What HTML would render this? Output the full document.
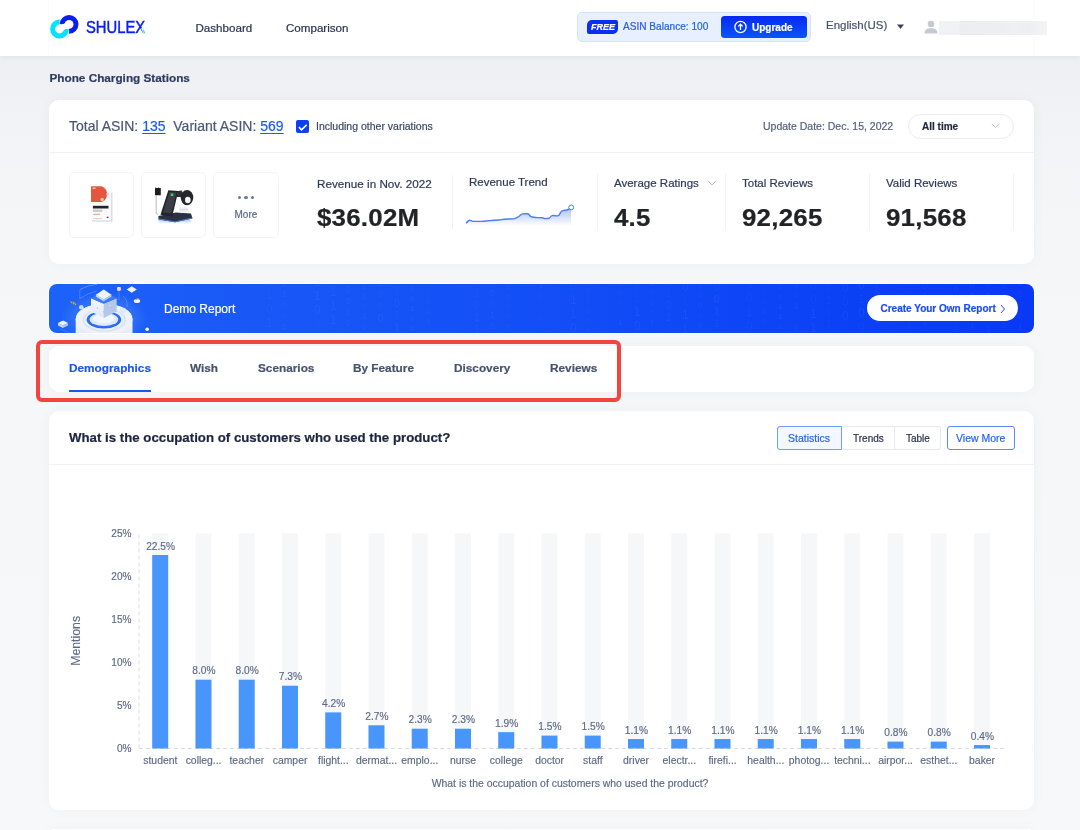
<!DOCTYPE html>
<html><head><meta charset="utf-8">
<style>
*{box-sizing:border-box;margin:0;padding:0}
html,body{width:1080px;height:830px;overflow:hidden}
body{will-change:transform}
.t{-webkit-text-stroke:0.2px currentColor}
body{background:linear-gradient(180deg,#edeff3 56px,#eff1f4 90px,#f2f3f6 130px,#f5f6f8 230px,#f6f7f9 500px,#f7f8fa 830px);font-family:"Liberation Sans",sans-serif;position:relative;color:#2e3a59}
.abs{position:absolute}
.t{position:absolute;white-space:nowrap;line-height:1}
#hdr{position:absolute;left:0;top:0;width:1080px;height:55.5px;background:#fff;box-shadow:0 1px 4px rgba(40,60,100,0.07)}
.card{position:absolute;background:#fff;border-radius:10px;box-shadow:0 0 14px rgba(30,40,70,0.035)}
</style></head>
<body>
<div id="hdr">
  <div class="abs" style="left:48px;top:0;width:1px;height:56px;background:#fafbfc"></div>
  <div class="abs" style="left:1034px;top:0;width:1px;height:56px;background:#fafbfc"></div>
  <svg class="abs" style="left:0;top:0" width="160" height="56" viewBox="0 0 160 56">
    <path d="M59.5 29 V19.6 A9.4 9.4 0 1 0 68.9 29 Z" fill="#00e5fd"/>
    <path d="M69.1 24.3 H59.7 A9.4 9.4 0 1 1 69.1 33.7 Z" fill="#0a1ef2"/>
    <circle cx="59.5" cy="29" r="4.4" fill="#fff"/>
    <circle cx="69.1" cy="24.3" r="4.4" fill="#fff"/>
    <path d="M59.5 29 L69.1 24.3" stroke="#fff" stroke-width="5.5"/>
  </svg>
  <div class="t" style="left:85.5px;top:18.5px;font-size:17px;color:#0820f4;transform:scaleX(0.87);transform-origin:0 0;-webkit-text-stroke:0.45px #0820f4">SHULEX</div>
  <svg class="abs" style="left:138px;top:26px" width="10" height="10" viewBox="138 26 10 10"><path d="M140.9 28.3 L142.6 28.3 L145.9 33.4 L143.6 33.4Z" fill="#fff"/><path d="M142.3 29.8 L143.6 29.8 L145.4 32.9 L144 32.9Z" fill="#3cd6f4"/></svg>
  <div class="t" style="left:195.5px;top:21.8px;font-size:11.6px;color:#28334f">Dashboard</div>
  <div class="t" style="left:286px;top:21.8px;font-size:11.6px;color:#28334f">Comparison</div>
  <div class="abs" style="left:577px;top:12px;width:234px;height:30px;background:#e9f0fd;border:1px solid #d6e2f8;border-radius:5px"></div>
  <div class="abs" style="left:586.5px;top:20px;width:31.7px;height:13.5px;background:#0a2ef2;border-radius:5px 2px 5px 2px"></div>
  <div class="t" style="left:591px;top:22.7px;font-size:9px;font-weight:bold;font-style:italic;color:#fff">FREE</div>
  <div class="t" style="left:623px;top:22px;font-size:10.1px;color:#2461ee">ASIN Balance: 100</div>
  <div class="abs" style="left:721px;top:16px;width:86px;height:21.5px;background:linear-gradient(180deg,#0628f0,#0a56fa);border-radius:3.5px"></div>
  <svg class="abs" style="left:733px;top:19.5px" width="15" height="15" viewBox="0 0 15 15">
    <circle cx="7.5" cy="7" r="5.6" fill="none" stroke="#fff" stroke-width="1.3"/>
    <path d="M7.5 10V4.3M5.3 6.4L7.5 4.2L9.7 6.4" fill="none" stroke="#fff" stroke-width="1.3"/>
  </svg>
  <div class="t" style="left:752px;top:23px;font-size:10px;font-weight:bold;color:#fff">Upgrade</div>
  <div class="t" style="left:826px;top:20px;font-size:11.5px;color:#47526f">English(US)</div>
  <svg class="abs" style="left:896px;top:24px" width="9" height="6"><path d="M1 0.5H8L4.5 5Z" fill="#3a4462"/></svg>
  <svg class="abs" style="left:923px;top:19px" width="16" height="16" viewBox="0 0 16 16">
    <circle cx="8" cy="5" r="3.3" fill="#c5c9d2"/>
    <path d="M1.5 14.5C1.5 10.5 4.5 9.3 8 9.3S14.5 10.5 14.5 14.5Z" fill="#c5c9d2"/>
  </svg>
  <div class="abs" style="left:939px;top:21px;width:108px;height:14px;background:linear-gradient(90deg,#f1f2f5 0,#f1f2f5 20px,#ebedf0 21px,#eceef1 60px,#eef0f3 75px,#eceef1 90px,#f3f4f6 108px)"></div>
</div>

<div class="t" style="left:49.5px;top:71.5px;font-size:11.75px;font-weight:bold;color:#2b3a5e">Phone Charging Stations</div>

<!-- Card 1 -->
<div class="card" style="left:49px;top:100px;width:985px;height:164px"></div>
<div class="t" style="left:69px;top:119px;font-size:14px;color:#4b5677">Total ASIN: <span style="color:#1d5cf0;text-decoration:underline;text-decoration-thickness:1.4px;text-underline-offset:2px">135</span>&nbsp; Variant ASIN: <span style="color:#1d5cf0;text-decoration:underline;text-decoration-thickness:1.4px;text-underline-offset:2px">569</span></div>
<div class="abs" style="left:296px;top:119.5px;width:13px;height:13px;background:#0b40f4;border-radius:2px"></div>
<svg class="abs" style="left:296px;top:119.5px" width="13" height="13"><path d="M2.9 7L5.5 9.8L10.7 4.8" fill="none" stroke="#fff" stroke-width="1.6"/></svg>
<div class="t" style="left:316px;top:121px;font-size:10.5px;color:#3d4866">Including other variations</div>
<div class="t" style="left:763px;top:121px;font-size:10.5px;color:#56617e">Update Date: Dec. 15, 2022</div>
<div class="abs" style="left:908px;top:113.5px;width:106px;height:25.5px;border:1px solid #ebedf1;border-radius:13px"></div>
<div class="t" style="left:922px;top:122px;font-size:10px;font-weight:bold;color:#1f2740">All time</div>
<svg class="abs" style="left:991px;top:123px" width="10" height="6"><path d="M0.8 0.8L4.6 4.6L8.4 0.8" fill="none" stroke="#b6bcc8" stroke-width="1"/></svg>
<div class="abs" style="left:49px;top:152px;width:985px;height:1px;background:#f1f2f5"></div>

<!-- thumbnails -->
<div class="abs" style="left:69px;top:172px;width:65px;height:66px;border:1px solid #f3f4f7;border-radius:5px"></div>
<div class="abs" style="left:141px;top:172px;width:65px;height:66px;border:1px solid #f3f4f7;border-radius:5px"></div>
<div class="abs" style="left:213px;top:172px;width:66px;height:66px;border:1px solid #f3f4f7;border-radius:5px"></div>
<svg class="abs" style="left:86px;top:182px" width="32" height="44" viewBox="86 182 32 44">
  <rect x="92" y="192.6" width="20.5" height="29.1" fill="#d9dde5"/>
  <rect x="91" y="186.2" width="19.9" height="34.2" fill="#fbfbfc"/>
  <path d="M91 186.2 H101.5 A8.5 8.5 0 0 1 101.5 202.1 H91Z" fill="#e4573f"/>
  <rect x="92.5" y="187.5" width="3" height="1.3" fill="#f3c9bf"/>
  <circle cx="107.7" cy="193.9" r="1.5" fill="#f1cbbd"/>
  <circle cx="102.2" cy="199.5" r="1.8" fill="#ecc3a6"/>
  <rect x="92.9" y="205.8" width="15.6" height="2.7" fill="#232326"/>
  <rect x="92.9" y="209.5" width="9.5" height="2.5" fill="#c9cbd0"/>
  <rect x="93.2" y="213.8" width="6.8" height="1" fill="#ef9a5c"/>
  <rect x="106.7" y="216.7" width="1.8" height="1.3" fill="#444"/>
  <rect x="93" y="218.3" width="9" height="0.8" fill="#c4c6cc"/>
</svg>
<svg class="abs" style="left:145px;top:180px" width="56" height="50" viewBox="145 180 56 50">
  <defs><linearGradient id="bglow" x1="0" y1="0" x2="0" y2="1"><stop offset="0" stop-color="#6ea4ff" stop-opacity="0.9"/><stop offset="1" stop-color="#9cc2ff" stop-opacity="0"/></linearGradient></defs>
  <path d="M157.5 218 L190 219.5 L192 224 L160 224Z" fill="url(#bglow)"/>
  <path d="M158.3 216 L176 212.5 L191 213.5 L192.5 218.5 L175 222.3 L158.8 219.5Z" fill="#2b3140"/>
  <path d="M158.5 218.8 L175 221.8 L192.3 218" fill="none" stroke="#4f7fe0" stroke-width="0.9"/>
  <path d="M155.7 187 V188 M158.5 187 V188" stroke="#777" stroke-width="0.6"/>
  <rect x="155" y="188.1" width="5.8" height="7.2" rx="0.5" fill="#1d1d1f"/>
  <path d="M156.2 195.3 V210.5 Q155 213.5 158 214.5" fill="none" stroke="#b9bcc4" stroke-width="1"/>
  <path d="M168.3 190.3 L178.3 190.9 L172.2 216.4 L160.5 214.7Z" fill="#242529"/>
  <path d="M169.5 192 L176.5 192.5 L171.5 213.5 L163 212.5Z" fill="#3b3e47"/>
  <rect x="170.8" y="193.6" width="2.5" height="2.3" fill="#2ee85a"/>
  <path d="M177.8 191 L182 190.5 L183 197 L176.5 197Z" fill="#2e2f33"/>
  <ellipse cx="187" cy="197.6" rx="6.3" ry="7.6" fill="#26272b"/>
  <ellipse cx="187.8" cy="200" rx="2.8" ry="3.3" fill="#f5f6f8"/>
  <path d="M178.8 208 L186.5 206.8 L189 211.5 L181 213.2Z" fill="#eceef2"/>
  <path d="M179.5 210 L188.5 209" stroke="#c8ccd4" stroke-width="0.6"/>
</svg>
<div class="abs" style="left:237.7px;top:196px;width:3.4px;height:3.4px;border-radius:50%;background:#6b7899"></div>
<div class="abs" style="left:244.4px;top:196px;width:3.4px;height:3.4px;border-radius:50%;background:#6b7899"></div>
<div class="abs" style="left:250.9px;top:196px;width:3.4px;height:3.4px;border-radius:50%;background:#6b7899"></div>
<div class="t" style="left:234.5px;top:210px;font-size:10px;color:#5e6a88">More</div>

<div class="t" style="left:317px;top:178px;font-size:11.7px;color:#2e3a59">Revenue in Nov. 2022</div>
<div class="t" style="left:317px;top:206.5px;font-size:23px;font-weight:bold;color:#222327;transform:scaleX(1.125);transform-origin:0 0;letter-spacing:0.2px">$36.02M</div>
<div class="abs" style="left:452px;top:175px;width:1px;height:54px;background:#f1f2f5"></div>
<div class="t" style="left:469px;top:176.5px;font-size:11.5px;color:#2e3a59">Revenue Trend</div>
<svg class="abs" style="left:460px;top:195px" width="120" height="35" viewBox="460 195 120 35">
  <defs><linearGradient id="sg" x1="0" y1="0" x2="0" y2="1"><stop offset="0" stop-color="#4a7cf5" stop-opacity="0.45"/><stop offset="1" stop-color="#4a7cf5" stop-opacity="0"/></linearGradient></defs>
  <path d="M466.1 223.3 C468 221 469 220 470 220.3 S472 221.4 473.3 221.4 L482.2 221.4 C486 221 488 220.6 490 220.6 S497 220 498.9 220 S502 219.2 504.4 219.2 S511 218.9 513.3 218.9 S516 217.8 517.8 217.2 S521 214 522.2 213.9 L527.8 213.7 C529 214 530 216.5 531.1 216.7 S536 217.6 537.8 217.6 S541 217.5 542.2 217.8 S544 218.6 545.6 218.6 S548 218.5 548.9 218.3 S551 215.8 552.2 215.6 S556 215.9 557.8 215.9 S560.5 211.5 561.7 211.1 S565 210 566.7 210 L571 208.5 L571 226 L466 226Z" fill="url(#sg)"/>
  <path d="M466.1 223.3 C468 221 469 220 470 220.3 S472 221.4 473.3 221.4 L482.2 221.4 C486 221 488 220.6 490 220.6 S497 220 498.9 220 S502 219.2 504.4 219.2 S511 218.9 513.3 218.9 S516 217.8 517.8 217.2 S521 214 522.2 213.9 L527.8 213.7 C529 214 530 216.5 531.1 216.7 S536 217.6 537.8 217.6 S541 217.5 542.2 217.8 S544 218.6 545.6 218.6 S548 218.5 548.9 218.3 S551 215.8 552.2 215.6 S556 215.9 557.8 215.9 S560.5 211.5 561.7 211.1 S565 210 566.7 210 L571 208.5" fill="none" stroke="#4a7cf5" stroke-width="1.4"/>
  <circle cx="571.2" cy="207.4" r="2.4" fill="#fff" stroke="#4a7cf5" stroke-width="1"/>
</svg>
<div class="abs" style="left:597px;top:173px;width:1px;height:57px;background:#f1f2f5"></div>
<div class="t" style="left:614px;top:178px;font-size:11.5px;color:#2e3a59">Average Ratings</div>
<svg class="abs" style="left:708px;top:181px" width="8" height="5"><path d="M0.5 0.5L4 4L7.5 0.5" fill="none" stroke="#b6bcc8" stroke-width="0.9"/></svg>
<div class="t" style="left:614px;top:206.5px;font-size:23px;font-weight:bold;color:#222327;transform:scaleX(1.125);transform-origin:0 0;letter-spacing:0.2px">4.5</div>
<div class="abs" style="left:725px;top:173px;width:1px;height:57px;background:#f1f2f5"></div>
<div class="t" style="left:742px;top:178px;font-size:11.5px;color:#2e3a59">Total Reviews</div>
<div class="t" style="left:742px;top:206.5px;font-size:23px;font-weight:bold;color:#222327;transform:scaleX(1.125);transform-origin:0 0;letter-spacing:0.2px">92,265</div>
<div class="abs" style="left:869px;top:173px;width:1px;height:57px;background:#f1f2f5"></div>
<div class="t" style="left:886px;top:178px;font-size:11.5px;color:#2e3a59">Valid Reviews</div>
<div class="t" style="left:886px;top:206.5px;font-size:23px;font-weight:bold;color:#222327;transform:scaleX(1.125);transform-origin:0 0;letter-spacing:0.2px">91,568</div>
<div class="abs" style="left:1013px;top:173px;width:1px;height:57px;background:#f1f2f5"></div>

<!-- Banner -->
<div class="abs" style="left:49px;top:284px;width:985px;height:49px;border-radius:8px;box-shadow:0 0 0 1px rgba(255,255,255,0.9);background:linear-gradient(90deg,#1c62f8 0%,#1958f7 20%,#1450f6 45%,#0c44f6 75%,#0838f5 100%);overflow:hidden"></div>
<svg class="abs" style="left:49px;top:284px" width="985" height="49" viewBox="0 0 985 49"><g font-family="Liberation Sans"><text x="217" y="1" font-size="12" fill="#fff" fill-opacity="0.042">0</text><text x="217" y="15" font-size="12" fill="#fff" fill-opacity="0.032">1</text><text x="217" y="29" font-size="12" fill="#fff" fill-opacity="0.026">0</text><text x="217" y="43" font-size="12" fill="#fff" fill-opacity="0.037">1</text><text x="233" y="2" font-size="9" fill="#fff" fill-opacity="0.042">0</text><text x="233" y="13" font-size="9" fill="#fff" fill-opacity="0.042">1</text><text x="233" y="24" font-size="9" fill="#fff" fill-opacity="0.026">0</text><text x="233" y="35" font-size="9" fill="#fff" fill-opacity="0.032">0</text><text x="233" y="46" font-size="9" fill="#fff" fill-opacity="0.047">0</text><text x="265" y="2" font-size="12" fill="#fff" fill-opacity="0.042">1</text><text x="265" y="16" font-size="12" fill="#fff" fill-opacity="0.053">1</text><text x="265" y="30" font-size="12" fill="#fff" fill-opacity="0.047">0</text><text x="265" y="44" font-size="12" fill="#fff" fill-opacity="0.021">0</text><text x="281" y="-2" font-size="12" fill="#fff" fill-opacity="0.037">1</text><text x="281" y="12" font-size="12" fill="#fff" fill-opacity="0.037">1</text><text x="281" y="26" font-size="12" fill="#fff" fill-opacity="0.042">1</text><text x="281" y="40" font-size="12" fill="#fff" fill-opacity="0.042">1</text><text x="297" y="-2" font-size="9" fill="#fff" fill-opacity="0.053">1</text><text x="297" y="9" font-size="9" fill="#fff" fill-opacity="0.042">0</text><text x="297" y="20" font-size="9" fill="#fff" fill-opacity="0.042">0</text><text x="297" y="31" font-size="9" fill="#fff" fill-opacity="0.032">1</text><text x="297" y="42" font-size="9" fill="#fff" fill-opacity="0.037">0</text><text x="313" y="5" font-size="8" fill="#fff" fill-opacity="0.047">1</text><text x="313" y="15" font-size="8" fill="#fff" fill-opacity="0.047">1</text><text x="313" y="25" font-size="8" fill="#fff" fill-opacity="0.032">0</text><text x="313" y="35" font-size="8" fill="#fff" fill-opacity="0.047">1</text><text x="313" y="45" font-size="8" fill="#fff" fill-opacity="0.042">0</text><text x="329" y="2" font-size="10" fill="#fff" fill-opacity="0.037">1</text><text x="329" y="14" font-size="10" fill="#fff" fill-opacity="0.032">0</text><text x="329" y="26" font-size="10" fill="#fff" fill-opacity="0.026">0</text><text x="329" y="38" font-size="10" fill="#fff" fill-opacity="0.053">0</text><text x="345" y="-1" font-size="10" fill="#fff" fill-opacity="0.042">0</text><text x="345" y="11" font-size="10" fill="#fff" fill-opacity="0.032">1</text><text x="345" y="23" font-size="10" fill="#fff" fill-opacity="0.047">0</text><text x="345" y="35" font-size="10" fill="#fff" fill-opacity="0.032">1</text><text x="345" y="47" font-size="10" fill="#fff" fill-opacity="0.042">1</text><text x="361" y="7" font-size="8" fill="#fff" fill-opacity="0.037">1</text><text x="361" y="17" font-size="8" fill="#fff" fill-opacity="0.053">0</text><text x="361" y="27" font-size="8" fill="#fff" fill-opacity="0.053">1</text><text x="361" y="37" font-size="8" fill="#fff" fill-opacity="0.037">1</text><text x="361" y="47" font-size="8" fill="#fff" fill-opacity="0.047">0</text><text x="377" y="0" font-size="8" fill="#fff" fill-opacity="0.042">1</text><text x="377" y="10" font-size="8" fill="#fff" fill-opacity="0.021">0</text><text x="377" y="20" font-size="8" fill="#fff" fill-opacity="0.037">1</text><text x="377" y="30" font-size="8" fill="#fff" fill-opacity="0.042">1</text><text x="377" y="40" font-size="8" fill="#fff" fill-opacity="0.042">1</text><text x="425" y="1" font-size="10" fill="#fff" fill-opacity="0.032">1</text><text x="425" y="13" font-size="10" fill="#fff" fill-opacity="0.026">1</text><text x="425" y="25" font-size="10" fill="#fff" fill-opacity="0.032">0</text><text x="425" y="37" font-size="10" fill="#fff" fill-opacity="0.047">1</text><text x="425" y="49" font-size="10" fill="#fff" fill-opacity="0.032">1</text><text x="441" y="-10" font-size="9" fill="#fff" fill-opacity="0.037">1</text><text x="441" y="1" font-size="9" fill="#fff" fill-opacity="0.026">1</text><text x="441" y="12" font-size="9" fill="#fff" fill-opacity="0.042">0</text><text x="441" y="23" font-size="9" fill="#fff" fill-opacity="0.026">0</text><text x="441" y="34" font-size="9" fill="#fff" fill-opacity="0.053">1</text><text x="441" y="45" font-size="9" fill="#fff" fill-opacity="0.037">0</text><text x="457" y="-5" font-size="8" fill="#fff" fill-opacity="0.042">1</text><text x="457" y="5" font-size="8" fill="#fff" fill-opacity="0.047">0</text><text x="457" y="15" font-size="8" fill="#fff" fill-opacity="0.032">1</text><text x="457" y="25" font-size="8" fill="#fff" fill-opacity="0.021">0</text><text x="457" y="35" font-size="8" fill="#fff" fill-opacity="0.032">0</text><text x="457" y="45" font-size="8" fill="#fff" fill-opacity="0.047">0</text><text x="489" y="-8" font-size="10" fill="#fff" fill-opacity="0.037">0</text><text x="489" y="4" font-size="10" fill="#fff" fill-opacity="0.037">1</text><text x="489" y="16" font-size="10" fill="#fff" fill-opacity="0.032">1</text><text x="489" y="28" font-size="10" fill="#fff" fill-opacity="0.021">1</text><text x="489" y="40" font-size="10" fill="#fff" fill-opacity="0.026">1</text><text x="521" y="6" font-size="12" fill="#fff" fill-opacity="0.021">0</text><text x="521" y="20" font-size="12" fill="#fff" fill-opacity="0.047">1</text><text x="521" y="34" font-size="12" fill="#fff" fill-opacity="0.037">1</text><text x="521" y="48" font-size="12" fill="#fff" fill-opacity="0.047">0</text><text x="537" y="-1" font-size="8" fill="#fff" fill-opacity="0.021">0</text><text x="537" y="9" font-size="8" fill="#fff" fill-opacity="0.047">0</text><text x="537" y="19" font-size="8" fill="#fff" fill-opacity="0.037">1</text><text x="537" y="29" font-size="8" fill="#fff" fill-opacity="0.037">0</text><text x="537" y="39" font-size="8" fill="#fff" fill-opacity="0.026">0</text><text x="537" y="49" font-size="8" fill="#fff" fill-opacity="0.026">1</text><text x="569" y="-9" font-size="8" fill="#fff" fill-opacity="0.026">1</text><text x="569" y="1" font-size="8" fill="#fff" fill-opacity="0.047">1</text><text x="569" y="11" font-size="8" fill="#fff" fill-opacity="0.032">0</text><text x="569" y="21" font-size="8" fill="#fff" fill-opacity="0.026">0</text><text x="569" y="31" font-size="8" fill="#fff" fill-opacity="0.026">0</text><text x="569" y="41" font-size="8" fill="#fff" fill-opacity="0.053">1</text><text x="585" y="-10" font-size="12" fill="#fff" fill-opacity="0.021">1</text><text x="585" y="4" font-size="12" fill="#fff" fill-opacity="0.026">1</text><text x="585" y="18" font-size="12" fill="#fff" fill-opacity="0.021">1</text><text x="585" y="32" font-size="12" fill="#fff" fill-opacity="0.047">1</text><text x="585" y="46" font-size="12" fill="#fff" fill-opacity="0.047">0</text><text x="601" y="-9" font-size="8" fill="#fff" fill-opacity="0.021">0</text><text x="601" y="1" font-size="8" fill="#fff" fill-opacity="0.047">0</text><text x="601" y="11" font-size="8" fill="#fff" fill-opacity="0.037">0</text><text x="601" y="21" font-size="8" fill="#fff" fill-opacity="0.032">1</text><text x="601" y="31" font-size="8" fill="#fff" fill-opacity="0.021">1</text><text x="601" y="41" font-size="8" fill="#fff" fill-opacity="0.042">1</text><text x="617" y="1" font-size="10" fill="#fff" fill-opacity="0.053">0</text><text x="617" y="13" font-size="10" fill="#fff" fill-opacity="0.026">1</text><text x="617" y="25" font-size="10" fill="#fff" fill-opacity="0.042">0</text><text x="617" y="37" font-size="10" fill="#fff" fill-opacity="0.047">1</text><text x="617" y="49" font-size="10" fill="#fff" fill-opacity="0.021">0</text><text x="633" y="7" font-size="12" fill="#fff" fill-opacity="0.042">0</text><text x="633" y="21" font-size="12" fill="#fff" fill-opacity="0.021">1</text><text x="633" y="35" font-size="12" fill="#fff" fill-opacity="0.047">1</text><text x="633" y="49" font-size="12" fill="#fff" fill-opacity="0.037">1</text><text x="649" y="4" font-size="8" fill="#fff" fill-opacity="0.026">0</text><text x="649" y="14" font-size="8" fill="#fff" fill-opacity="0.042">1</text><text x="649" y="24" font-size="8" fill="#fff" fill-opacity="0.047">0</text><text x="649" y="34" font-size="8" fill="#fff" fill-opacity="0.037">0</text><text x="649" y="44" font-size="8" fill="#fff" fill-opacity="0.053">0</text><text x="665" y="7" font-size="10" fill="#fff" fill-opacity="0.037">0</text><text x="665" y="19" font-size="10" fill="#fff" fill-opacity="0.053">0</text><text x="665" y="31" font-size="10" fill="#fff" fill-opacity="0.042">1</text><text x="665" y="43" font-size="10" fill="#fff" fill-opacity="0.037">1</text><text x="697" y="-10" font-size="12" fill="#fff" fill-opacity="0.026">0</text><text x="697" y="4" font-size="12" fill="#fff" fill-opacity="0.021">1</text><text x="697" y="18" font-size="12" fill="#fff" fill-opacity="0.037">0</text><text x="697" y="32" font-size="12" fill="#fff" fill-opacity="0.026">1</text><text x="697" y="46" font-size="12" fill="#fff" fill-opacity="0.032">0</text><text x="713" y="-10" font-size="8" fill="#fff" fill-opacity="0.047">1</text><text x="713" y="0" font-size="8" fill="#fff" fill-opacity="0.037">1</text><text x="713" y="10" font-size="8" fill="#fff" fill-opacity="0.021">0</text><text x="713" y="20" font-size="8" fill="#fff" fill-opacity="0.026">0</text><text x="713" y="30" font-size="8" fill="#fff" fill-opacity="0.053">0</text><text x="713" y="40" font-size="8" fill="#fff" fill-opacity="0.037">0</text><text x="729" y="-5" font-size="8" fill="#fff" fill-opacity="0.053">0</text><text x="729" y="5" font-size="8" fill="#fff" fill-opacity="0.037">0</text><text x="729" y="15" font-size="8" fill="#fff" fill-opacity="0.032">1</text><text x="729" y="25" font-size="8" fill="#fff" fill-opacity="0.053">1</text><text x="729" y="35" font-size="8" fill="#fff" fill-opacity="0.053">1</text><text x="729" y="45" font-size="8" fill="#fff" fill-opacity="0.037">1</text><text x="745" y="3" font-size="9" fill="#fff" fill-opacity="0.042">1</text><text x="745" y="14" font-size="9" fill="#fff" fill-opacity="0.026">1</text><text x="745" y="25" font-size="9" fill="#fff" fill-opacity="0.047">1</text><text x="745" y="36" font-size="9" fill="#fff" fill-opacity="0.026">0</text><text x="745" y="47" font-size="9" fill="#fff" fill-opacity="0.042">1</text><text x="761" y="6" font-size="12" fill="#fff" fill-opacity="0.026">0</text><text x="761" y="20" font-size="12" fill="#fff" fill-opacity="0.026">0</text><text x="761" y="34" font-size="12" fill="#fff" fill-opacity="0.053">1</text><text x="761" y="48" font-size="12" fill="#fff" fill-opacity="0.042">1</text><text x="777" y="8" font-size="10" fill="#fff" fill-opacity="0.032">0</text><text x="777" y="20" font-size="10" fill="#fff" fill-opacity="0.037">1</text><text x="777" y="32" font-size="10" fill="#fff" fill-opacity="0.026">1</text><text x="777" y="44" font-size="10" fill="#fff" fill-opacity="0.026">1</text><text x="793" y="-6" font-size="12" fill="#fff" fill-opacity="0.042">1</text><text x="793" y="8" font-size="12" fill="#fff" fill-opacity="0.037">0</text><text x="793" y="22" font-size="12" fill="#fff" fill-opacity="0.037">0</text><text x="793" y="36" font-size="12" fill="#fff" fill-opacity="0.047">0</text><text x="809" y="-9" font-size="12" fill="#fff" fill-opacity="0.047">0</text><text x="809" y="5" font-size="12" fill="#fff" fill-opacity="0.053">0</text><text x="809" y="19" font-size="12" fill="#fff" fill-opacity="0.026">1</text><text x="809" y="33" font-size="12" fill="#fff" fill-opacity="0.047">0</text><text x="809" y="47" font-size="12" fill="#fff" fill-opacity="0.026">0</text><text x="825" y="-9" font-size="10" fill="#fff" fill-opacity="0.047">0</text><text x="825" y="3" font-size="10" fill="#fff" fill-opacity="0.026">1</text><text x="825" y="15" font-size="10" fill="#fff" fill-opacity="0.042">0</text><text x="825" y="27" font-size="10" fill="#fff" fill-opacity="0.026">0</text><text x="825" y="39" font-size="10" fill="#fff" fill-opacity="0.047">1</text><text x="857" y="8" font-size="10" fill="#fff" fill-opacity="0.021">0</text><text x="857" y="20" font-size="10" fill="#fff" fill-opacity="0.037">1</text><text x="857" y="32" font-size="10" fill="#fff" fill-opacity="0.021">1</text><text x="857" y="44" font-size="10" fill="#fff" fill-opacity="0.032">1</text><text x="873" y="-7" font-size="10" fill="#fff" fill-opacity="0.042">0</text><text x="873" y="5" font-size="10" fill="#fff" fill-opacity="0.037">0</text><text x="873" y="17" font-size="10" fill="#fff" fill-opacity="0.026">1</text><text x="873" y="29" font-size="10" fill="#fff" fill-opacity="0.042">1</text><text x="873" y="41" font-size="10" fill="#fff" fill-opacity="0.047">1</text><text x="905" y="-2" font-size="8" fill="#fff" fill-opacity="0.042">1</text><text x="905" y="8" font-size="8" fill="#fff" fill-opacity="0.042">0</text><text x="905" y="18" font-size="8" fill="#fff" fill-opacity="0.021">1</text><text x="905" y="28" font-size="8" fill="#fff" fill-opacity="0.042">1</text><text x="905" y="38" font-size="8" fill="#fff" fill-opacity="0.042">0</text><text x="905" y="48" font-size="8" fill="#fff" fill-opacity="0.026">0</text><text x="921" y="4" font-size="8" fill="#fff" fill-opacity="0.053">0</text><text x="921" y="14" font-size="8" fill="#fff" fill-opacity="0.053">0</text><text x="921" y="24" font-size="8" fill="#fff" fill-opacity="0.037">1</text><text x="921" y="34" font-size="8" fill="#fff" fill-opacity="0.037">0</text><text x="921" y="44" font-size="8" fill="#fff" fill-opacity="0.047">1</text><text x="937" y="-7" font-size="9" fill="#fff" fill-opacity="0.032">1</text><text x="937" y="4" font-size="9" fill="#fff" fill-opacity="0.032">1</text><text x="937" y="15" font-size="9" fill="#fff" fill-opacity="0.047">0</text><text x="937" y="26" font-size="9" fill="#fff" fill-opacity="0.037">0</text><text x="937" y="37" font-size="9" fill="#fff" fill-opacity="0.026">1</text><text x="937" y="48" font-size="9" fill="#fff" fill-opacity="0.047">1</text><text x="953" y="4" font-size="8" fill="#fff" fill-opacity="0.037">1</text><text x="953" y="14" font-size="8" fill="#fff" fill-opacity="0.026">0</text><text x="953" y="24" font-size="8" fill="#fff" fill-opacity="0.042">0</text><text x="953" y="34" font-size="8" fill="#fff" fill-opacity="0.026">0</text><text x="953" y="44" font-size="8" fill="#fff" fill-opacity="0.037">0</text><text x="969" y="2" font-size="9" fill="#fff" fill-opacity="0.047">0</text><text x="969" y="13" font-size="9" fill="#fff" fill-opacity="0.037">0</text><text x="969" y="24" font-size="9" fill="#fff" fill-opacity="0.037">0</text><text x="969" y="35" font-size="9" fill="#fff" fill-opacity="0.047">0</text><text x="969" y="46" font-size="9" fill="#fff" fill-opacity="0.047">1</text></g></svg><svg class="abs" style="left:49px;top:284px" width="110" height="49" viewBox="49 284 110 49">
  <defs>
   <radialGradient id="glow" cx="0.5" cy="0.5" r="0.5"><stop offset="0" stop-color="#8fbaff" stop-opacity="0.5"/><stop offset="1" stop-color="#8fbaff" stop-opacity="0"/></radialGradient>
   <linearGradient id="plat" x1="0" y1="0" x2="0" y2="1"><stop offset="0" stop-color="#f6f8fd"/><stop offset="1" stop-color="#dfe7f5"/></linearGradient>
   <linearGradient id="lface" x1="0" y1="0" x2="0" y2="1"><stop offset="0" stop-color="#f4f7fd"/><stop offset="1" stop-color="#dfe8f8"/></linearGradient>
  </defs>
  <ellipse cx="104" cy="318" rx="44" ry="26" fill="url(#glow)"/>
  <path d="M75.7 319.3 A28.4 15.6 0 0 1 132.5 319.3 V345 H75.7Z" fill="url(#plat)"/>
  <ellipse cx="104.1" cy="319.3" rx="28.4" ry="15.6" fill="#edf2fa"/>
  <ellipse cx="104.3" cy="320" rx="21.7" ry="11.8" fill="#d9e3f3"/>
  <ellipse cx="104.3" cy="320" rx="20" ry="10.6" fill="#e9eff9"/>
  <ellipse cx="103.9" cy="319.7" rx="17.3" ry="8.75" fill="#2a6cf6"/>
  <ellipse cx="103.9" cy="319.4" rx="14.3" ry="6.6" fill="#dce8fc"/>
  <ellipse cx="103.9" cy="318.6" rx="11" ry="4.8" fill="#f1f5fd"/>
  <path d="M91 298.2 L103.7 303.7 L103.7 318 L91 311.5Z" fill="url(#lface)"/>
  <path d="M103.7 303.7 L116.7 298.2 L116.7 311.5 L103.7 318Z" fill="#b3c7e8"/>
  <path d="M91 298.2 L103.7 291.4 L116.7 298.2 L103.7 303.7Z" fill="#3b7bf7"/>
  <path d="M95.9 294.7 L103.7 289.5 L111.5 294.7 L103.7 299.5Z" fill="#eef2f9"/>
  <path d="M95.9 294.7 L103.7 299.5 L103.7 301.3 L95.9 296.5Z" fill="#d3def0"/>
  <path d="M103.7 299.5 L111.5 294.7 L111.5 296.5 L103.7 301.3Z" fill="#b9cbe9"/>
  <circle cx="97.5" cy="308" r="0.6" fill="#7aa5f5"/>
  <path d="M109 306 L111 305" stroke="#e8eef8" stroke-width="0.6"/>
  <path d="M58 323 L63 320.5 L68 323 L63 325.5Z" fill="#eef2fa"/>
  <path d="M58 323 L63 325.5 L63 328 L58 325.5Z" fill="#cdd8ec"/>
  <path d="M63 325.5 L68 323 L68 325.5 L63 328Z" fill="#b3c4e4"/>
  <path d="M126.7 289.4 L131.7 286.2 L136.8 289.4 L131.7 292.7Z" fill="#eef3fb"/>
  <rect x="117" y="286.9" width="3.9" height="3.9" rx="1.3" fill="#eef2f8"/>
  <rect x="117" y="288.5" width="3.9" height="0.9" fill="#f3b070"/>
  <circle cx="81.3" cy="307.3" r="2.3" fill="#c4d9fd"/>
  <circle cx="122.5" cy="310.5" r="3" fill="#cfe0fd" fill-opacity="0.55"/>
  <ellipse cx="137" cy="301" rx="3.2" ry="2" fill="#eef2fa"/>
  <path d="M135 300 L138.5 298.5" stroke="#f0a040" stroke-width="1.2"/>
  <path d="M70.5 301 L72 303.5 M72.8 301.5 L74 304.5 M74.5 302.5 L75.8 305" stroke="#f2a33a" stroke-width="1" fill="none"/>
  <path d="M80 289.5 Q88 285 97 284.3" stroke="#b7cffc" stroke-width="0.6" fill="none" opacity="0.7"/>
  <path d="M79.8 299 V290 M79.8 298.5 Q88 293 97 291" stroke="#b7cffc" stroke-width="0.5" fill="none" opacity="0.55"/>
  <path d="M119 291 V300 M123 296 Q128 300 127 307" stroke="#a9c4fb" stroke-width="0.5" fill="none" opacity="0.6"/>
  <path d="M60 329 L70 333" stroke="#a9c4fb" stroke-width="0.5" opacity="0.5"/>
  <circle cx="147.2" cy="329.3" r="1.8" fill="#fff"/>
</svg>
<div class="t" style="left:164px;top:303px;font-size:12px;color:#fff">Demo Report</div>
<div class="abs" style="left:867px;top:295px;width:151px;height:26px;border-radius:13px;background:#fff"></div>
<div class="t" style="left:880.5px;top:304px;font-size:10px;font-weight:bold;color:#1a4ef2">Create Your Own Report</div>
<svg class="abs" style="left:999.5px;top:303.5px" width="6" height="10"><path d="M1 1L4.5 5L1 9" fill="none" stroke="#1a4ef2" stroke-width="1"/></svg>

<!-- Tabs -->
<div class="card" style="left:49px;top:346px;width:985px;height:46px"></div>
<div class="t" style="left:69px;top:362.5px;font-size:11.8px;font-weight:bold;color:#1c57f0">Demographics</div>
<div class="abs" style="left:69px;top:390px;width:82px;height:2px;background:#1c57f0"></div>
<div class="t" style="left:190px;top:362.5px;font-size:11.8px;font-weight:bold;color:#47526f">Wish</div>
<div class="t" style="left:258px;top:362.5px;font-size:11.8px;font-weight:bold;color:#47526f">Scenarios</div>
<div class="t" style="left:353px;top:362.5px;font-size:11.8px;font-weight:bold;color:#47526f">By Feature</div>
<div class="t" style="left:454px;top:362.5px;font-size:11.8px;font-weight:bold;color:#47526f">Discovery</div>
<div class="t" style="left:550px;top:362.5px;font-size:11.8px;font-weight:bold;color:#47526f">Reviews</div>
<div class="abs" style="left:36px;top:339.5px;width:585px;height:62.5px;border:4px solid #f3443d;border-radius:6px"></div>

<!-- Chart card -->
<div class="card" style="left:49px;top:411px;width:985px;height:398.5px"></div>
<div class="t" style="left:69px;top:431px;font-size:13.25px;font-weight:bold;color:#1d2540">What is the occupation of customers who used the product?</div>
<div class="abs" style="left:49px;top:464px;width:985px;height:1px;background:#f1f2f5"></div>
<div class="abs" style="left:777px;top:426px;width:164px;height:24px;border:1px solid #e6e8ed;border-radius:3px"></div>
<div class="abs" style="left:777px;top:426px;width:65px;height:24px;border:1px solid #6e9cf6;background:#f4f7ff;border-radius:3px 0 0 3px"></div>
<div class="abs" style="left:894px;top:426px;width:1px;height:24px;background:#e6e8ed"></div>
<div class="t" style="left:788px;top:433px;font-size:10.5px;color:#2a62f0">Statistics</div>
<div class="t" style="left:853px;top:434px;font-size:10px;color:#28334f">Trends</div>
<div class="t" style="left:906px;top:434px;font-size:10px;color:#28334f">Table</div>
<div class="abs" style="left:947px;top:426px;width:68px;height:24px;border:1px solid #5b8cf0;border-radius:3px"></div>
<div class="t" style="left:956px;top:433px;font-size:10.5px;color:#2a62f0">View More</div>

<svg class="abs" id="chart" style="left:0;top:465px" width="1080" height="340" viewBox="0 465 1080 340">
<rect x="152.22" y="533.5" width="16" height="215.0" fill="#f6f7f9"/>
<rect x="195.47" y="533.5" width="16" height="215.0" fill="#f6f7f9"/>
<rect x="238.72" y="533.5" width="16" height="215.0" fill="#f6f7f9"/>
<rect x="281.98" y="533.5" width="16" height="215.0" fill="#f6f7f9"/>
<rect x="325.23" y="533.5" width="16" height="215.0" fill="#f6f7f9"/>
<rect x="368.48" y="533.5" width="16" height="215.0" fill="#f6f7f9"/>
<rect x="411.73" y="533.5" width="16" height="215.0" fill="#f6f7f9"/>
<rect x="454.98" y="533.5" width="16" height="215.0" fill="#f6f7f9"/>
<rect x="498.23" y="533.5" width="16" height="215.0" fill="#f6f7f9"/>
<rect x="541.48" y="533.5" width="16" height="215.0" fill="#f6f7f9"/>
<rect x="584.73" y="533.5" width="16" height="215.0" fill="#f6f7f9"/>
<rect x="627.98" y="533.5" width="16" height="215.0" fill="#f6f7f9"/>
<rect x="671.23" y="533.5" width="16" height="215.0" fill="#f6f7f9"/>
<rect x="714.48" y="533.5" width="16" height="215.0" fill="#f6f7f9"/>
<rect x="757.73" y="533.5" width="16" height="215.0" fill="#f6f7f9"/>
<rect x="800.98" y="533.5" width="16" height="215.0" fill="#f6f7f9"/>
<rect x="844.23" y="533.5" width="16" height="215.0" fill="#f6f7f9"/>
<rect x="887.48" y="533.5" width="16" height="215.0" fill="#f6f7f9"/>
<rect x="930.73" y="533.5" width="16" height="215.0" fill="#f6f7f9"/>
<rect x="973.98" y="533.5" width="16" height="215.0" fill="#f6f7f9"/>
<path d="M139.0 748.5V533.5M139.0 748.5H1004.0" fill="none" stroke="#d9dce1" stroke-width="1" stroke-dasharray="4 3"/>
<text x="131.5" y="752.10" text-anchor="end" font-family="Liberation Sans" stroke="#5d6985" stroke-width="0.15" font-size="10.1" fill="#5d6985">0%</text>
<text x="131.5" y="709.10" text-anchor="end" font-family="Liberation Sans" stroke="#5d6985" stroke-width="0.15" font-size="10.1" fill="#5d6985">5%</text>
<text x="131.5" y="666.10" text-anchor="end" font-family="Liberation Sans" stroke="#5d6985" stroke-width="0.15" font-size="10.1" fill="#5d6985">10%</text>
<text x="131.5" y="623.10" text-anchor="end" font-family="Liberation Sans" stroke="#5d6985" stroke-width="0.15" font-size="10.1" fill="#5d6985">15%</text>
<text x="131.5" y="580.10" text-anchor="end" font-family="Liberation Sans" stroke="#5d6985" stroke-width="0.15" font-size="10.1" fill="#5d6985">20%</text>
<text x="131.5" y="537.10" text-anchor="end" font-family="Liberation Sans" stroke="#5d6985" stroke-width="0.15" font-size="10.1" fill="#5d6985">25%</text>
<rect x="152.22" y="555.00" width="16" height="193.50" fill="#4896fb"/>
<text x="160.62" y="549.50" text-anchor="middle" font-family="Liberation Sans" stroke="#5d6985" stroke-width="0.15" font-size="10.2" fill="#5d6985">22.5%</text>
<text x="160.32" y="763.60" text-anchor="middle" font-family="Liberation Sans" stroke="#5d6985" stroke-width="0.15" font-size="10.4" fill="#5d6985">student</text>
<rect x="195.47" y="679.70" width="16" height="68.80" fill="#4896fb"/>
<text x="203.88" y="674.20" text-anchor="middle" font-family="Liberation Sans" stroke="#5d6985" stroke-width="0.15" font-size="10.2" fill="#5d6985">8.0%</text>
<text x="203.57" y="763.60" text-anchor="middle" font-family="Liberation Sans" stroke="#5d6985" stroke-width="0.15" font-size="10.4" fill="#5d6985">colleg...</text>
<rect x="238.72" y="679.70" width="16" height="68.80" fill="#4896fb"/>
<text x="247.12" y="674.20" text-anchor="middle" font-family="Liberation Sans" stroke="#5d6985" stroke-width="0.15" font-size="10.2" fill="#5d6985">8.0%</text>
<text x="246.82" y="763.60" text-anchor="middle" font-family="Liberation Sans" stroke="#5d6985" stroke-width="0.15" font-size="10.4" fill="#5d6985">teacher</text>
<rect x="281.98" y="685.72" width="16" height="62.78" fill="#4896fb"/>
<text x="290.38" y="680.22" text-anchor="middle" font-family="Liberation Sans" stroke="#5d6985" stroke-width="0.15" font-size="10.2" fill="#5d6985">7.3%</text>
<text x="290.07" y="763.60" text-anchor="middle" font-family="Liberation Sans" stroke="#5d6985" stroke-width="0.15" font-size="10.4" fill="#5d6985">camper</text>
<rect x="325.23" y="712.38" width="16" height="36.12" fill="#4896fb"/>
<text x="333.62" y="706.88" text-anchor="middle" font-family="Liberation Sans" stroke="#5d6985" stroke-width="0.15" font-size="10.2" fill="#5d6985">4.2%</text>
<text x="333.32" y="763.60" text-anchor="middle" font-family="Liberation Sans" stroke="#5d6985" stroke-width="0.15" font-size="10.4" fill="#5d6985">flight...</text>
<rect x="368.48" y="725.28" width="16" height="23.22" fill="#4896fb"/>
<text x="376.88" y="719.78" text-anchor="middle" font-family="Liberation Sans" stroke="#5d6985" stroke-width="0.15" font-size="10.2" fill="#5d6985">2.7%</text>
<text x="376.57" y="763.60" text-anchor="middle" font-family="Liberation Sans" stroke="#5d6985" stroke-width="0.15" font-size="10.4" fill="#5d6985">dermat...</text>
<rect x="411.73" y="728.72" width="16" height="19.78" fill="#4896fb"/>
<text x="420.12" y="723.22" text-anchor="middle" font-family="Liberation Sans" stroke="#5d6985" stroke-width="0.15" font-size="10.2" fill="#5d6985">2.3%</text>
<text x="419.82" y="763.60" text-anchor="middle" font-family="Liberation Sans" stroke="#5d6985" stroke-width="0.15" font-size="10.4" fill="#5d6985">emplo...</text>
<rect x="454.98" y="728.72" width="16" height="19.78" fill="#4896fb"/>
<text x="463.38" y="723.22" text-anchor="middle" font-family="Liberation Sans" stroke="#5d6985" stroke-width="0.15" font-size="10.2" fill="#5d6985">2.3%</text>
<text x="463.07" y="763.60" text-anchor="middle" font-family="Liberation Sans" stroke="#5d6985" stroke-width="0.15" font-size="10.4" fill="#5d6985">nurse</text>
<rect x="498.23" y="732.16" width="16" height="16.34" fill="#4896fb"/>
<text x="506.62" y="726.66" text-anchor="middle" font-family="Liberation Sans" stroke="#5d6985" stroke-width="0.15" font-size="10.2" fill="#5d6985">1.9%</text>
<text x="506.32" y="763.60" text-anchor="middle" font-family="Liberation Sans" stroke="#5d6985" stroke-width="0.15" font-size="10.4" fill="#5d6985">college</text>
<rect x="541.48" y="735.60" width="16" height="12.90" fill="#4896fb"/>
<text x="549.88" y="730.10" text-anchor="middle" font-family="Liberation Sans" stroke="#5d6985" stroke-width="0.15" font-size="10.2" fill="#5d6985">1.5%</text>
<text x="549.58" y="763.60" text-anchor="middle" font-family="Liberation Sans" stroke="#5d6985" stroke-width="0.15" font-size="10.4" fill="#5d6985">doctor</text>
<rect x="584.73" y="735.60" width="16" height="12.90" fill="#4896fb"/>
<text x="593.12" y="730.10" text-anchor="middle" font-family="Liberation Sans" stroke="#5d6985" stroke-width="0.15" font-size="10.2" fill="#5d6985">1.5%</text>
<text x="592.83" y="763.60" text-anchor="middle" font-family="Liberation Sans" stroke="#5d6985" stroke-width="0.15" font-size="10.4" fill="#5d6985">staff</text>
<rect x="627.98" y="739.04" width="16" height="9.46" fill="#4896fb"/>
<text x="636.38" y="733.54" text-anchor="middle" font-family="Liberation Sans" stroke="#5d6985" stroke-width="0.15" font-size="10.2" fill="#5d6985">1.1%</text>
<text x="636.08" y="763.60" text-anchor="middle" font-family="Liberation Sans" stroke="#5d6985" stroke-width="0.15" font-size="10.4" fill="#5d6985">driver</text>
<rect x="671.23" y="739.04" width="16" height="9.46" fill="#4896fb"/>
<text x="679.62" y="733.54" text-anchor="middle" font-family="Liberation Sans" stroke="#5d6985" stroke-width="0.15" font-size="10.2" fill="#5d6985">1.1%</text>
<text x="679.33" y="763.60" text-anchor="middle" font-family="Liberation Sans" stroke="#5d6985" stroke-width="0.15" font-size="10.4" fill="#5d6985">electr...</text>
<rect x="714.48" y="739.04" width="16" height="9.46" fill="#4896fb"/>
<text x="722.88" y="733.54" text-anchor="middle" font-family="Liberation Sans" stroke="#5d6985" stroke-width="0.15" font-size="10.2" fill="#5d6985">1.1%</text>
<text x="722.58" y="763.60" text-anchor="middle" font-family="Liberation Sans" stroke="#5d6985" stroke-width="0.15" font-size="10.4" fill="#5d6985">firefi...</text>
<rect x="757.73" y="739.04" width="16" height="9.46" fill="#4896fb"/>
<text x="766.12" y="733.54" text-anchor="middle" font-family="Liberation Sans" stroke="#5d6985" stroke-width="0.15" font-size="10.2" fill="#5d6985">1.1%</text>
<text x="765.83" y="763.60" text-anchor="middle" font-family="Liberation Sans" stroke="#5d6985" stroke-width="0.15" font-size="10.4" fill="#5d6985">health...</text>
<rect x="800.98" y="739.04" width="16" height="9.46" fill="#4896fb"/>
<text x="809.38" y="733.54" text-anchor="middle" font-family="Liberation Sans" stroke="#5d6985" stroke-width="0.15" font-size="10.2" fill="#5d6985">1.1%</text>
<text x="809.08" y="763.60" text-anchor="middle" font-family="Liberation Sans" stroke="#5d6985" stroke-width="0.15" font-size="10.4" fill="#5d6985">photog...</text>
<rect x="844.23" y="739.04" width="16" height="9.46" fill="#4896fb"/>
<text x="852.62" y="733.54" text-anchor="middle" font-family="Liberation Sans" stroke="#5d6985" stroke-width="0.15" font-size="10.2" fill="#5d6985">1.1%</text>
<text x="852.33" y="763.60" text-anchor="middle" font-family="Liberation Sans" stroke="#5d6985" stroke-width="0.15" font-size="10.4" fill="#5d6985">techni...</text>
<rect x="887.48" y="741.62" width="16" height="6.88" fill="#4896fb"/>
<text x="895.88" y="736.12" text-anchor="middle" font-family="Liberation Sans" stroke="#5d6985" stroke-width="0.15" font-size="10.2" fill="#5d6985">0.8%</text>
<text x="895.58" y="763.60" text-anchor="middle" font-family="Liberation Sans" stroke="#5d6985" stroke-width="0.15" font-size="10.4" fill="#5d6985">airpor...</text>
<rect x="930.73" y="741.62" width="16" height="6.88" fill="#4896fb"/>
<text x="939.12" y="736.12" text-anchor="middle" font-family="Liberation Sans" stroke="#5d6985" stroke-width="0.15" font-size="10.2" fill="#5d6985">0.8%</text>
<text x="938.83" y="763.60" text-anchor="middle" font-family="Liberation Sans" stroke="#5d6985" stroke-width="0.15" font-size="10.4" fill="#5d6985">esthet...</text>
<rect x="973.98" y="745.06" width="16" height="3.44" fill="#4896fb"/>
<text x="982.38" y="739.56" text-anchor="middle" font-family="Liberation Sans" stroke="#5d6985" stroke-width="0.15" font-size="10.2" fill="#5d6985">0.4%</text>
<text x="982.08" y="763.60" text-anchor="middle" font-family="Liberation Sans" stroke="#5d6985" stroke-width="0.15" font-size="10.4" fill="#5d6985">baker</text>
<text transform="translate(80.2,640.9) rotate(-90)" text-anchor="middle" font-family="Liberation Sans" stroke="#5d6985" stroke-width="0.15" font-size="12.3" fill="#5d6985">Mentions</text>
<text x="570" y="786.8" text-anchor="middle" font-family="Liberation Sans" stroke="#5d6985" stroke-width="0.15" font-size="10.45" fill="#5d6985">What is the occupation of customers who used the product?</text>
</svg>

<div class="card" style="left:49px;top:828.5px;width:985px;height:10px"></div>
</body></html>
